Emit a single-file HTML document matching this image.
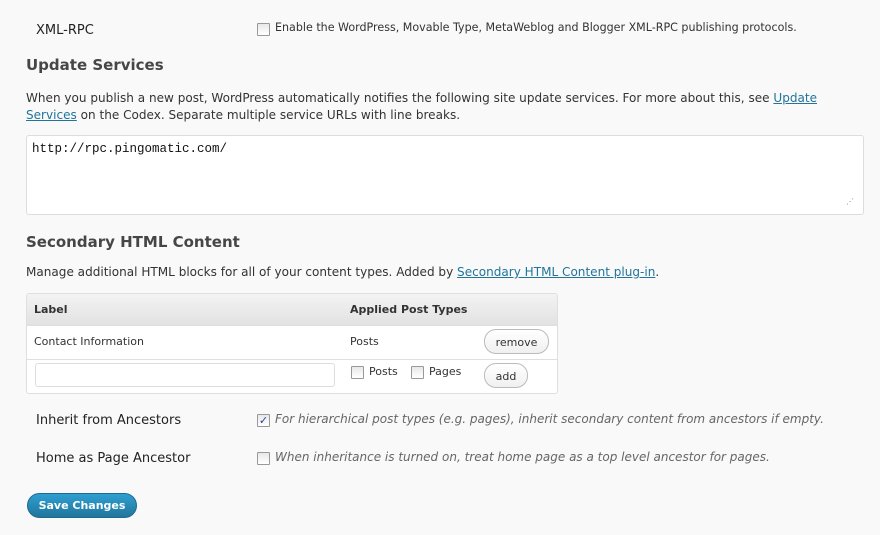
<!DOCTYPE html>
<html><head><meta charset="utf-8"><style>
body{margin:0;width:880px;height:535px;background:#f9f9f9;font-family:"DejaVu Sans","Liberation Sans",sans-serif;color:#333;position:relative;overflow:hidden}
.a{position:absolute;white-space:nowrap}
.lbl{font-size:13px;color:#222}
.d{font-size:11.5px;color:#333}
h3{position:absolute;margin:0;font-size:15px;font-weight:bold;color:#464646}
.cb{position:absolute;width:11px;height:11px;border:1px solid #999;background:linear-gradient(#e8e8e8,#fff);border-radius:1px}
a{color:#21759b;text-decoration:underline}
.btn{position:absolute;border:1px solid #bbb;border-radius:12px;background:linear-gradient(#fff,#f0f0f0);font-size:11px;text-align:center;color:#333;box-sizing:border-box}
.it{font-style:italic;color:#666;font-size:12px}
</style></head><body>
<div class="a lbl" style="left:36px;top:23px">XML-RPC</div>
<div class="cb" style="left:257px;top:23px"></div>
<div class="a d" style="left:275px;top:21px;font-size:11.1px">Enable the WordPress, Movable Type, MetaWeblog and Blogger XML-RPC publishing protocols.</div>
<h3 style="left:26px;top:56px">Update Services</h3>
<div class="a d" style="left:26px;top:90px;font-size:12.05px;line-height:17px">When you publish a new post, WordPress automatically notifies the following site update services. For more about this, see <a>Update</a><br><a>Services</a> on the Codex. Separate multiple service URLs with line breaks.</div>
<div class="a" style="left:26px;top:135px;width:836px;height:78px;border:1px solid #ddd;background:#fff;border-radius:3px"></div>
<div class="a" style="left:32px;top:142px;font-family:'Liberation Mono',monospace;font-size:12.5px;color:#111">http://rpc.pingomatic.com/</div>
<div class="a" style="left:846px;top:197px;font-size:8px;color:#888">⋰</div>
<h3 style="left:26px;top:233px">Secondary HTML Content</h3>
<div class="a d" style="left:26px;top:265px;font-size:12.05px">Manage additional HTML blocks for all of your content types. Added by <a>Secondary HTML Content plug-in</a>.</div>
<div class="a" style="left:26px;top:293px;width:530px;height:99px;border:1px solid #dfdfdf;border-radius:3px;background:#fff;overflow:hidden">
<div style="height:31px;background:linear-gradient(#f3f3f3,#e2e2e2);border-bottom:1px solid #dfdfdf"></div>
<div style="position:absolute;top:65px;left:0;right:0;border-top:1px solid #dfdfdf"></div>
</div>
<div class="a" style="left:34px;top:303px;font-size:11px;font-weight:bold;color:#333">Label</div>
<div class="a" style="left:350px;top:303px;font-size:11px;font-weight:bold;color:#333">Applied Post Types</div>
<div class="a" style="left:34px;top:335px;font-size:11px">Contact Information</div>
<div class="a" style="left:350px;top:335px;font-size:11px">Posts</div>
<div class="btn" style="left:484px;top:329px;width:65px;height:25px;line-height:25px">remove</div>
<div class="a" style="left:35px;top:363px;width:298px;height:22px;border:1px solid #ddd;border-radius:3px;background:#fff"></div>
<div class="cb" style="left:351px;top:366px"></div>
<div class="a" style="left:369px;top:365px;font-size:11px">Posts</div>
<div class="cb" style="left:411px;top:366px"></div>
<div class="a" style="left:429px;top:365px;font-size:11px">Pages</div>
<div class="btn" style="left:484px;top:363px;width:44px;height:25px;line-height:25px">add</div>
<div class="a lbl" style="left:36px;top:413px">Inherit from Ancestors</div>
<div class="cb" style="left:257px;top:414px;color:#2a3aa0;font-size:11px;line-height:11px;text-align:center;font-weight:bold">✓</div>
<div class="a it" style="left:275px;top:412px">For hierarchical post types (e.g. pages), inherit secondary content from ancestors if empty.</div>
<div class="a lbl" style="left:36px;top:451px">Home as Page Ancestor</div>
<div class="cb" style="left:257px;top:452px"></div>
<div class="a it" style="left:275px;top:450px">When inheritance is turned on, treat home page as a top level ancestor for pages.</div>
<div class="a" style="left:27px;top:493px;width:110px;height:25px;border-radius:13px;background:linear-gradient(#2e9fd2,#21759b);border:1px solid #1e6a8d;box-sizing:border-box;color:#fff;font-size:11px;font-weight:bold;text-align:center;line-height:24px">Save Changes</div>
</body></html>
